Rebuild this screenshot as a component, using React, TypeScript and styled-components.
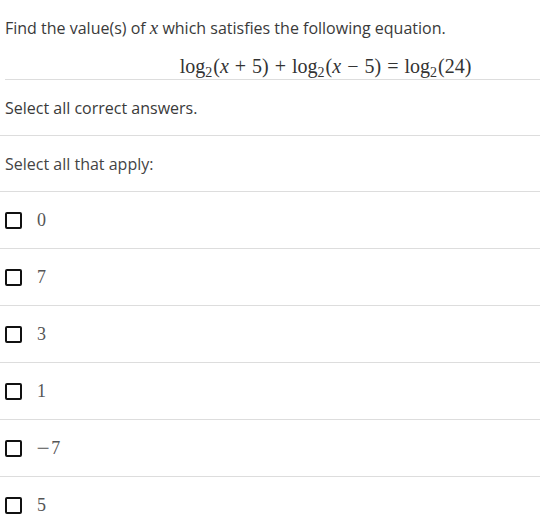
import styled, { createGlobalStyle } from 'styled-components';

const GlobalStyle = createGlobalStyle`
  html, body {
    margin: 0;
    padding: 0;
    background: #ffffff;
  }
  body {
    font-family: 'Open Sans', 'Liberation Sans', sans-serif;
    color: #3a3a3a;
  }
`;

const options: { sign?: boolean; value: string }[] = [
  { value: '0' },
  { value: '7' },
  { value: '3' },
  { value: '1' },
  { sign: true, value: '7' },
  { value: '5' },
];

const App = () => {
  return (
    <Page>
      <GlobalStyle />
      <Prompt>
        <Text>
          Find the value(s) of <MathVar>x</MathVar> which satisfies the following equation.
        </Text>
        <Equation>
          <MathLine>
            log<Sub>2</Sub>(<MathVar>x</MathVar>
            <Op>+</Op>5)<Op>+</Op>log<Sub>2</Sub>(<MathVar>x</MathVar>
            <Op>−</Op>5)<Op>=</Op>log<Sub>2</Sub>(24)
          </MathLine>
        </Equation>
        <Instruction>Select all correct answers.</Instruction>
      </Prompt>
      <Legend>Select all that apply:</Legend>
      <OptionList>
        {options.map((opt, i) => (
          <OptionRow key={i}>
            <Box type="checkbox" id={`opt-${i}`} />
            <OptionLabel htmlFor={`opt-${i}`}>
              {opt.sign && <Minus>−</Minus>}
              {opt.value}
            </OptionLabel>
          </OptionRow>
        ))}
      </OptionList>
    </Page>
  );
};

const Page = styled.div`
  width: 540px;
`;

const Prompt = styled.div`
  border-bottom: 1px solid #dddddd;
`;

const Text = styled.p`
  margin: 0;
  padding: 16px 0 0 5px;
  font-size: 16px;
  line-height: 24px;
  color: #3a3a3a;
`;

const MathVar = styled.i`
  font-family: 'Liberation Serif', 'Times New Roman', serif;
  font-size: 19px;
  font-style: italic;
`;

const Equation = styled.div`
  margin: 14px 0 0 5px;
  padding-left: 106px;
  height: 25px;
  line-height: 24px;
  text-align: center;
  border-bottom: 1px solid #dddddd;
`;

const MathLine = styled.span`
  font-family: 'Liberation Serif', 'Times New Roman', serif;
  font-size: 20px;
  color: #333333;
  white-space: nowrap;

  ${MathVar} {
    font-size: 20px;
  }
`;

const Op = styled.span`
  margin: 0 6px;
`;

const Sub = styled.span`
  font-size: 14px;
  position: relative;
  top: 4px;
  margin-right: 1px;
`;

const Instruction = styled.p`
  margin: 0;
  padding: 18px 0 17px 5px;
  font-size: 16px;
  line-height: 20px;
  color: #3a3a3a;
`;

const Legend = styled.div`
  padding: 18px 0 17px 5px;
  font-size: 16px;
  line-height: 20px;
  color: #444444;
  border-bottom: 1px solid #dddddd;
`;

const OptionList = styled.div`
  display: flex;
  flex-direction: column;
`;

const OptionRow = styled.div`
  display: flex;
  align-items: center;
  gap: 15px;
  height: 56px;
  padding-left: 5px;
  border-bottom: 1px solid #dddddd;

  &:last-child {
    border-bottom: none;
  }
`;

const Box = styled.input`
  appearance: none;
  margin: 0;
  width: 17px;
  height: 17px;
  box-sizing: border-box;
  border: 2.5px solid #111111;
  border-radius: 2px;
  background: #ffffff;
  flex-shrink: 0;
`;

const OptionLabel = styled.label`
  font-family: 'Liberation Serif', 'Times New Roman', serif;
  font-size: 18px;
  color: #555555;
  line-height: 20px;
`;

const Minus = styled.span`
  display: inline-block;
  transform: scaleX(1.3);
  margin: 0 3px 0 1px;
`;

export default App;
